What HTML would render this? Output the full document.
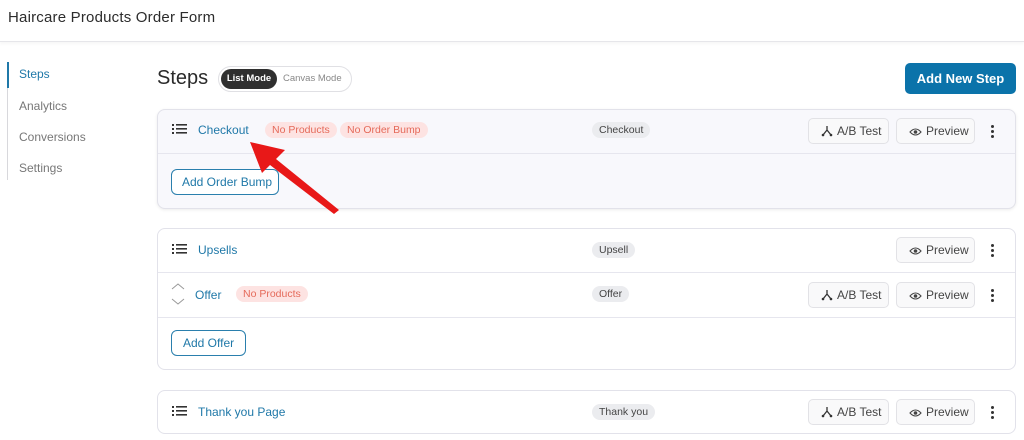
<!DOCTYPE html>
<html><head><style>
*{box-sizing:border-box;margin:0;padding:0}
body{width:1024px;height:440px;background:#fff;font-family:"Liberation Sans",sans-serif;position:relative;overflow:hidden;color:#333}
.a{position:absolute}
.hdr{left:0;top:0;width:1024px;height:42px;border-bottom:1px solid #e6e6ea;box-shadow:0 2px 3px rgba(0,0,0,.04)}
.hdr span{position:absolute;left:8px;top:9px;font-size:15px;color:#2c2c2c;letter-spacing:.2px}
.nav{left:7px;top:62px;border-left:1px solid #d8d8dc;height:118px}
.nav div{position:absolute;left:11px;font-size:12px;color:#777;white-space:nowrap}
.card{left:157px;width:859px;border:1px solid #e2e2ea;border-radius:8px;background:#fff}
.row{position:absolute;left:0;width:857px;border-bottom:1px solid #e6e6ee}
.t{position:absolute;font-size:12px;color:#1f78a8}
.pill{position:absolute;height:16px;border-radius:8px;font-size:10.5px;line-height:16px;padding:0 7px;white-space:nowrap}
.red{background:#fde3e2;color:#e56a5a}
.gray{background:#ebecef;color:#444}
.btn{position:absolute;height:26px;border:1px solid #e2e2e6;border-radius:5px;background:#f9f9fa;font-size:12px;color:#444;line-height:24px;padding-left:12px;white-space:nowrap}
.btn svg{vertical-align:-2px;margin-right:4px}
.ob{position:absolute;height:26px;border:1px solid #2a7fad;border-radius:6px;font-size:12px;color:#1f78a8;line-height:24px;padding:0 11px;background:#fff}
.dots{position:absolute;width:3px}
.dots i{display:block;width:3px;height:3px;background:#333;border-radius:50%;margin-bottom:2px}
</style></head><body>
<div class="a hdr"><span>Haircare Products Order Form</span></div>
<div class="a nav">
<div style="top:5px;color:#1f78a8">Steps</div>
<div class="a" style="left:-1px;top:0;width:2px;height:26px;background:#1f78a8"></div>
<div style="top:37px">Analytics</div>
<div style="top:68px">Conversions</div>
<div style="top:99px">Settings</div>
</div>
<div class="a" style="left:157px;top:67px;font-size:20px;color:#2a2a2a">Steps</div>
<div class="a" style="left:218px;top:66px;width:134px;height:26px;border:1px solid #e0e0e4;border-radius:13px">
<div class="a" style="left:2px;top:2px;width:56px;height:20px;border-radius:10px;background:#2f2f2f;color:#fff;font-size:9.5px;font-weight:bold;line-height:20px;text-align:center">List Mode</div>
<div class="a" style="left:64px;top:2px;font-size:9.5px;line-height:20px;color:#888">Canvas Mode</div>
</div>
<div class="a" style="left:905px;top:63px;width:111px;height:31px;background:#0b73aa;border-radius:5px;color:#fff;font-weight:bold;font-size:13px;line-height:31px;text-align:center">Add New Step</div>

<!-- card1 -->
<div class="a card" style="top:109px;height:100px;background:#f8f8fc;box-shadow:0 1px 3px rgba(0,0,0,.08)">
<div class="row" style="top:0;height:44px"></div>
</div>
<svg class="a" style="left:172px;top:123px" width="15" height="12"><g fill="#333"><rect x="0" y="1" width="2" height="2"/><rect x="4" y="1" width="11" height="1.6"/><rect x="0" y="5" width="2" height="2"/><rect x="4" y="5" width="11" height="1.6"/><rect x="0" y="9" width="2" height="2"/><rect x="4" y="9" width="11" height="1.6"/></g></svg>
<div class="t" style="left:198px;top:123px">Checkout</div>
<div class="pill red" style="left:265px;top:122px">No Products</div>
<div class="pill red" style="left:340px;top:122px">No Order Bump</div>
<div class="pill gray" style="left:592px;top:122px">Checkout</div>
<div class="btn" style="left:808px;top:118px;width:81px"><svg width="12" height="12"><path d="M6 1V5M6 5L2 10M6 5L10 10" stroke="#333" stroke-width="1.3" fill="none"/><circle cx="2" cy="10" r="1.3" fill="#333"/><circle cx="10" cy="10" r="1.3" fill="#333"/></svg>A/B Test</div>
<div class="btn" style="left:896px;top:118px;width:79px"><svg width="13" height="10"><path d="M1 5Q6.5-1 12 5Q6.5 11 1 5Z" stroke="#444" stroke-width="1.1" fill="none"/><circle cx="6.5" cy="5" r="1.8" fill="#444"/></svg>Preview</div>
<div class="dots" style="left:991px;top:125px"><i></i><i></i><i></i></div>
<div class="ob" style="left:171px;top:169px;width:108px;padding:0 0 0 10px">Add Order Bump</div>
<svg class="a" style="left:245px;top:138px" width="100" height="78"><polygon points="5,4 40,12 31,21 94,72 89,76 25,27 17,35" fill="#e81818"/></svg>

<!-- card2 -->
<div class="a card" style="top:228px;height:142px">
<div class="row" style="top:0;height:44px"></div>
<div class="row" style="top:44px;height:45px"></div>
</div>
<svg class="a" style="left:172px;top:243px" width="15" height="12"><g fill="#333"><rect x="0" y="1" width="2" height="2"/><rect x="4" y="1" width="11" height="1.6"/><rect x="0" y="5" width="2" height="2"/><rect x="4" y="5" width="11" height="1.6"/><rect x="0" y="9" width="2" height="2"/><rect x="4" y="9" width="11" height="1.6"/></g></svg>
<div class="t" style="left:198px;top:243px">Upsells</div>
<div class="pill gray" style="left:592px;top:242px">Upsell</div>
<div class="btn" style="left:896px;top:237px;width:79px"><svg width="13" height="10"><path d="M1 5Q6.5-1 12 5Q6.5 11 1 5Z" stroke="#444" stroke-width="1.1" fill="none"/><circle cx="6.5" cy="5" r="1.8" fill="#444"/></svg>Preview</div>
<div class="dots" style="left:991px;top:244px"><i></i><i></i><i></i></div>
<svg class="a" style="left:171px;top:282px" width="14" height="24"><path d="M1 7 L7 2 L13 7 M1 17 L7 22 L13 17" fill="none" stroke="#999" stroke-width="1"/></svg>
<div class="t" style="left:195px;top:288px">Offer</div>
<div class="pill red" style="left:236px;top:286px">No Products</div>
<div class="pill gray" style="left:592px;top:286px">Offer</div>
<div class="btn" style="left:808px;top:282px;width:81px"><svg width="12" height="12"><path d="M6 1V5M6 5L2 10M6 5L10 10" stroke="#333" stroke-width="1.3" fill="none"/><circle cx="2" cy="10" r="1.3" fill="#333"/><circle cx="10" cy="10" r="1.3" fill="#333"/></svg>A/B Test</div>
<div class="btn" style="left:896px;top:282px;width:79px"><svg width="13" height="10"><path d="M1 5Q6.5-1 12 5Q6.5 11 1 5Z" stroke="#444" stroke-width="1.1" fill="none"/><circle cx="6.5" cy="5" r="1.8" fill="#444"/></svg>Preview</div>
<div class="dots" style="left:991px;top:289px"><i></i><i></i><i></i></div>
<div class="ob" style="left:171px;top:330px">Add Offer</div>

<!-- card3 -->
<div class="a card" style="top:390px;height:44px"></div>
<svg class="a" style="left:172px;top:405px" width="15" height="12"><g fill="#333"><rect x="0" y="1" width="2" height="2"/><rect x="4" y="1" width="11" height="1.6"/><rect x="0" y="5" width="2" height="2"/><rect x="4" y="5" width="11" height="1.6"/><rect x="0" y="9" width="2" height="2"/><rect x="4" y="9" width="11" height="1.6"/></g></svg>
<div class="t" style="left:198px;top:405px">Thank you Page</div>
<div class="pill gray" style="left:592px;top:404px">Thank you</div>
<div class="btn" style="left:808px;top:399px;width:81px"><svg width="12" height="12"><path d="M6 1V5M6 5L2 10M6 5L10 10" stroke="#333" stroke-width="1.3" fill="none"/><circle cx="2" cy="10" r="1.3" fill="#333"/><circle cx="10" cy="10" r="1.3" fill="#333"/></svg>A/B Test</div>
<div class="btn" style="left:896px;top:399px;width:79px"><svg width="13" height="10"><path d="M1 5Q6.5-1 12 5Q6.5 11 1 5Z" stroke="#444" stroke-width="1.1" fill="none"/><circle cx="6.5" cy="5" r="1.8" fill="#444"/></svg>Preview</div>
<div class="dots" style="left:991px;top:406px"><i></i><i></i><i></i></div>
</body></html>
